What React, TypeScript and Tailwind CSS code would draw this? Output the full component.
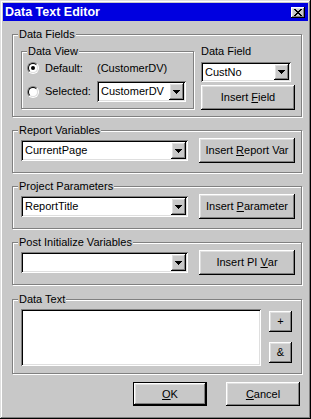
import type { ReactNode } from 'react';

const FACE = 'bg-[#c8c8c8]';
const RAISED =
  'shadow-[inset_-1px_-1px_0_#000,inset_1px_1px_0_#fff,inset_-2px_-2px_0_#808080,inset_2px_2px_0_#dfdfdf]';
const SUNKEN =
  'shadow-[inset_1px_1px_0_#808080,inset_-1px_-1px_0_#fff,inset_2px_2px_0_#000,inset_-2px_-2px_0_#dfdfdf]';

function Arrow() {
  return (
    <svg width="7" height="4" viewBox="0 0 7 4" shapeRendering="crispEdges">
      <path d="M0 0h7v1H0zM1 1h5v1H1zM2 2h3v1H2zM3 3h1v1H3z" fill="#000" />
    </svg>
  );
}

function CloseGlyph() {
  return (
    <svg width="8" height="7" viewBox="0 0 8 7" shapeRendering="crispEdges">
      <path
        d="M0 0h2v1H0zM6 0h2v1H6zM1 1h2v1H1zM5 1h2v1H5zM2 2h4v1H2zM3 3h2v1H3zM2 4h4v1H2zM1 5h2v1H1zM5 5h2v1H5zM0 6h2v1H0zM6 6h2v1H6z"
        fill="#000"
      />
    </svg>
  );
}

function Radio({ checked = false }: { checked?: boolean }) {
  return (
    <span className="flex h-[12px] w-[12px] shrink-0 rounded-full border border-t-[#808080] border-l-[#808080] border-b-white border-r-white">
      <span className="flex flex-1 items-center justify-center rounded-full border border-t-black border-l-black border-b-[#dfdfdf] border-r-[#dfdfdf] bg-white">
        {checked && <span className="h-[4px] w-[4px] rounded-full bg-black" />}
      </span>
    </span>
  );
}

function Combo({ value, className }: { value: string; className: string }) {
  return (
    <div className={`flex shrink-0 bg-white p-[2px] ${SUNKEN} ${className}`}>
      <span className="flex flex-1 items-center overflow-hidden whitespace-nowrap pl-[2px]">{value}</span>
      <span className={`flex w-[15px] items-center justify-center ${FACE} ${RAISED}`}>
        <Arrow />
      </span>
    </div>
  );
}

function Button({
  children,
  className = '',
  isDefault = false,
}: {
  children: ReactNode;
  className?: string;
  isDefault?: boolean;
}) {
  if (isDefault) {
    return (
      <button className={`shrink-0 border border-black ${className}`}>
        <span className={`flex h-full w-full items-center justify-center ${RAISED}`}>{children}</span>
      </button>
    );
  }
  return (
    <button className={`flex shrink-0 items-center justify-center ${RAISED} ${className}`}>{children}</button>
  );
}

function Group({
  label,
  className = '',
  boxClass,
  children,
}: {
  label: string;
  className?: string;
  boxClass: string;
  children: ReactNode;
}) {
  return (
    <div className={className}>
      <div className={`relative z-10 ml-[6px] w-fit px-[1px] ${FACE}`}>{label}</div>
      <div
        className={`-mt-[7px] border border-[#808080] shadow-[inset_1px_1px_0_#fff,1px_1px_0_#fff] ${boxClass}`}
      >
        {children}
      </div>
    </div>
  );
}

export default function App() {
  return (
    <div
      className={`flex h-[419px] w-[311px] flex-col p-[3px] font-['Liberation_Sans',Arial,sans-serif] text-[11px] leading-[13px] text-black ${FACE} shadow-[inset_-1px_-1px_0_#000,inset_1px_1px_0_#dfdfdf,inset_-2px_-2px_0_#808080,inset_2px_2px_0_#fff]`}
    >
      {/* Title bar */}
      <div className="flex h-[18px] shrink-0 items-center bg-[#0000e0] pl-[2px] pr-[3px]">
        <span className="flex-1 text-[12.5px] font-bold leading-none text-white">Data Text Editor</span>
        <button className={`flex h-[11px] w-[14px] items-center justify-center ${FACE} ${RAISED}`}>
          <CloseGlyph />
        </button>
      </div>

      <div className="flex flex-col pl-[9px] pr-[6px] pt-[7px]">
        {/* Data Fields */}
        <Group label="Data Fields" boxClass="flex items-start pt-[10px] pb-[6px] pl-[8px] pr-[6px]">
          <Group
            label="Data View"
            className="w-[173px] shrink-0"
            boxClass="flex flex-col gap-[6px] pt-[9px] pb-[6px] pl-[5px]"
          >
            <div className="flex h-[14px] items-center">
              <div className="flex w-[70px] items-center gap-[6px]">
                <Radio checked />
                <span>Default:</span>
              </div>
              <span>(CustomerDV)</span>
            </div>
            <div className="flex h-[21px] items-center">
              <div className="flex w-[70px] items-center gap-[6px]">
                <Radio />
                <span>Selected:</span>
              </div>
              <Combo value="CustomerDV" className="h-[21px] w-[89px]" />
            </div>
          </Group>
          <div className="ml-[7px] flex w-[94px] flex-col">
            <span>Data Field</span>
            <Combo value="CustNo" className="mt-[4px] h-[20px] w-[90px]" />
            <Button className="mt-[3px] h-[25px] w-[94px]">
              Insert&nbsp;<u>F</u>ield
            </Button>
          </div>
        </Group>

        {/* Report Variables */}
        <Group label="Report Variables" className="mt-[7px]" boxClass="flex items-center pt-[7px] pb-[9px] pl-[8px] pr-[6px]">
          <Combo value="CurrentPage" className="h-[21px] w-[167px]" />
          <Button className="ml-[11px] h-[25px] w-[96px]">
            Insert&nbsp;<u>R</u>eport Var
          </Button>
        </Group>

        {/* Project Parameters */}
        <Group label="Project Parameters" className="mt-[7px]" boxClass="flex items-center pt-[7px] pb-[9px] pl-[8px] pr-[6px]">
          <Combo value="ReportTitle" className="h-[21px] w-[167px]" />
          <Button className="ml-[11px] h-[25px] w-[96px]">
            Insert&nbsp;<u>P</u>arameter
          </Button>
        </Group>

        {/* Post Initialize Variables */}
        <Group
          label="Post Initialize Variables"
          className="mt-[7px]"
          boxClass="flex items-center pt-[7px] pb-[9px] pl-[8px] pr-[6px]"
        >
          <Combo value="" className="h-[21px] w-[167px]" />
          <Button className="ml-[11px] h-[25px] w-[96px]">
            Insert PI&nbsp;<u>V</u>ar
          </Button>
        </Group>

        {/* Data Text */}
        <Group label="Data Text" className="mt-[8px]" boxClass="flex items-start pt-[9px] pb-[7px] pl-[8px] pr-[9px]">
          <div className={`h-[57px] w-[240px] shrink-0 bg-white ${SUNKEN}`} />
          <div className="ml-[8px] mt-[2px] flex flex-col gap-[10px]">
            <Button className="h-[21px] w-[23px]">+</Button>
            <Button className="h-[21px] w-[23px]">&amp;</Button>
          </div>
        </Group>

        {/* Footer buttons */}
        <div className="mt-[8px] flex justify-end gap-[19px] pr-[2px]">
          <Button isDefault className="h-[24px] w-[74px]">
            <u>O</u>K
          </Button>
          <Button className="h-[24px] w-[74px]">
            <u>C</u>ancel
          </Button>
        </div>
      </div>
    </div>
  );
}
